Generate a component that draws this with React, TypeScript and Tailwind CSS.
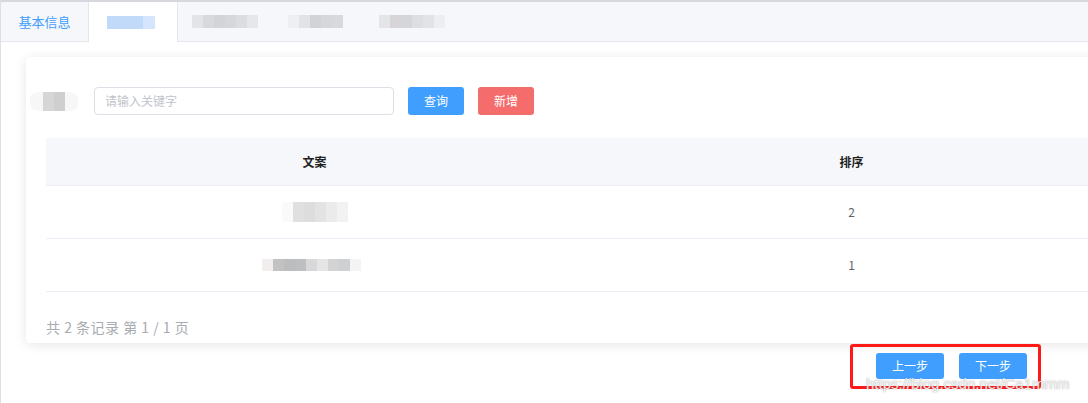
import React from 'react';

const font = { fontFamily: '"Noto Sans CJK SC", "Noto Sans", sans-serif' };

// mosaic blocks standing in for the pixelated text in the screenshot
function Mosaic({ cells, h }: { cells: string[]; h: string }) {
  return (
    <div className={`flex ${h}`}>
      {cells.map((c, i) => (
        <div key={i} className="h-full w-[11px]" style={{ background: c }} />
      ))}
    </div>
  );
}

export default function App() {
  return (
    <div
      className="relative h-[403px] w-[1088px] overflow-hidden border-l border-[#dcdfe6] bg-white"
      style={font}
    >
      <div className="h-[2px] bg-[#d6d8dd]" />

      {/* tabs */}
      <div className="flex h-[40px] border-b border-[#e4e7ed] bg-[#f5f7fa]">
        <div className="flex w-[88px] items-center justify-center border-r border-[#e4e7ed] text-[13px] text-[#409eff]">
          基本信息
        </div>
        <div className="-mb-px flex w-[89px] items-center justify-center border-r border-[#e4e7ed] bg-white">
          <div className="-ml-[4px] flex h-[13px]">
            <div className="w-[36px] bg-[#c2daf9]" />
            <div className="w-[12px] bg-[#d5e5fb]" />
          </div>
        </div>
        <div className="flex items-center pl-[14px]">
          <Mosaic cells={['#e3e4e8', '#d8d9dd', '#d3d4d8', '#d6d7db', '#dcdde1', '#e6e7eb']} h="h-[13px]" />
        </div>
        <div className="flex items-center pl-[30px]">
          <Mosaic cells={['#eeeff2', '#e2e3e6', '#d2d3d7', '#d6d7da', '#d8d9dd']} h="h-[13px]" />
        </div>
        <div className="flex items-center pl-[36px]">
          <Mosaic cells={['#e4e5e8', '#d8d5d8', '#d4d6da', '#dddee1', '#e2e3e6', '#eceef1']} h="h-[13px]" />
        </div>
      </div>

      {/* card */}
      <div className="pl-[25px] pt-[15px]">
        <div className="w-[1110px] rounded-[4px] bg-white pb-[7px] pl-[20px] pt-[30px] shadow-[0_2px_12px_rgba(0,0,0,0.1)]">
          <div className="flex h-[28px] items-center">
            <div className="-ml-[16px] flex h-[19px] w-[48px] items-center justify-center rounded-[8px] bg-[#f7f7f7]">
              <Mosaic cells={['#d6d6d6', '#cfcfcf']} h="h-[19px]" />
            </div>
            <div className="ml-[16px] flex h-[28px] w-[300px] items-center rounded-[4px] border border-[#dcdfe6] px-[10px] text-[12px] text-[#c0c4cc]">
              请输入关键字
            </div>
            <button className="ml-[14px] flex h-[28px] w-[56px] items-center justify-center rounded-[3px] bg-[#409eff] text-[12px] text-white">
              查询
            </button>
            <button className="ml-[14px] flex h-[28px] w-[56px] items-center justify-center rounded-[3px] bg-[#f56c6c] text-[12px] text-white">
              新增
            </button>
          </div>

          <div className="mt-[23px] w-[1074px] text-[12px]">
            <div className="grid h-[48px] grid-cols-2 border-b border-[#ebeef5] bg-[#f5f7fa] font-semibold text-[#1f1f1f]">
              <div className="flex items-center justify-center">文案</div>
              <div className="flex items-center justify-center">排序</div>
            </div>
            <div className="grid h-[53px] grid-cols-2 border-b border-[#ebeef5] text-[#606266]">
              <div className="flex items-center justify-center">
                <Mosaic cells={['#fafafa', '#e0e0e0', '#dddddd', '#e3e3e3', '#ebebeb', '#f2f2f2']} h="h-[20px]" />
              </div>
              <div className="flex items-center justify-center">2</div>
            </div>
            <div className="grid h-[53px] grid-cols-2 border-b border-[#ebeef5] text-[#606266]">
              <div className="flex items-center justify-center pr-[6px]">
                <Mosaic cells={['#f2eeee', '#c2c2c2', '#bcbdbf', '#bdbfc1', '#d8d8da', '#e5e5e6', '#d2d3d5', '#cfd0d2', '#f4f4f5']} h="h-[12px]" />
              </div>
              <div className="flex items-center justify-center">1</div>
            </div>
            <div className="flex h-[44px] items-center pt-[27px] text-[14px] tracking-[0.5px] text-[#a8abb2]">
              共 2 条记录 第 1 / 1 页
            </div>
          </div>
        </div>
      </div>

      {/* step buttons */}
      <div className="mt-[10px] flex justify-end gap-[15px] pr-[61px]">
        <button className="flex h-[26px] w-[68px] items-center justify-center rounded-[3px] bg-[#409eff] text-[12px] text-white">
          上一步
        </button>
        <button className="flex h-[26px] w-[68px] items-center justify-center rounded-[3px] bg-[#409eff] text-[12px] text-white">
          下一步
        </button>
      </div>

      {/* annotation frame */}
      <div className="absolute left-[849px] top-[344px] h-[45px] w-[191px] rounded-[3px] border-[3px] border-[#ff1a1a]" />

      {/* watermark */}
      <div
        className="absolute left-[865px] top-[373px] text-[15px] text-white/85"
        style={{ fontFamily: '"Liberation Sans", Arial, sans-serif', textShadow: '0 0 1.5px rgba(110,110,110,0.8)' }}
      >
        https://blog.csdn.net/Ca1mmm
      </div>
    </div>
  );
}
